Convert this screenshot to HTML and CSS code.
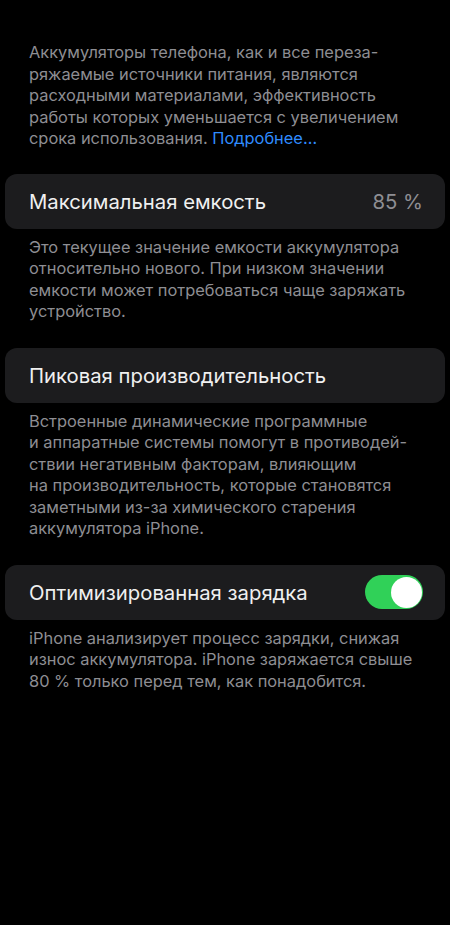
FILE: index.html
```html
<!DOCTYPE html>
<html lang="ru">
<head>
<meta charset="utf-8">
<link rel="stylesheet" href="styles.css">
</head>
<body>
<div class="page">
  <p class="note first">Аккумуляторы телефона, как и все переза-<br>ряжаемые источники питания, являются<br>расходными материалами, эффективность<br>работы которых уменьшается с увеличением<br>срока использования. <span class="link">Подробнее…</span></p>

  <div class="card"><span class="title">Максимальная емкость</span><span class="value">85 %</span></div>
  <p class="note">Это текущее значение емкости аккумулятора<br>относительно нового. При низком значении<br>емкости может потребоваться чаще заряжать<br>устройство.</p>

  <div class="card"><span class="title">Пиковая производительность</span></div>
  <p class="note">Встроенные динамические программные<br>и аппаратные системы помогут в противодей-<br>ствии негативным факторам, влияющим<br>на производительность, которые становятся<br>заметными из-за химического старения<br>аккумулятора iPhone.</p>

  <div class="card"><span class="title">Оптимизированная зарядка</span><span class="toggle"><span class="knob"></span></span></div>
  <p class="note">iPhone анализирует процесс зарядки, снижая<br>износ аккумулятора. iPhone заряжается свыше<br>80 % только перед тем, как понадобится.</p>
</div>
</body>
</html>
```

FILE: styles.css
```css
html, body {
  margin: 0;
  padding: 0;
  background: #000;
}
body {
  width: 450px;
  height: 925px;
  overflow: hidden;
  font-family: Inter, Roboto, "Noto Sans", sans-serif;
}
.page {
  padding: 42px 5px 0 5px;
}
.note {
  margin: 0 0 25px 0;
  padding: 8px 0 0 24px;
  color: #8e8e93;
  font-size: 16.4px;
  line-height: 21.5px;
  white-space: nowrap;
}
.note.first {
  padding-top: 0;
  margin-bottom: 24px;
}
.link {
  color: #2f8cff;
}
.card {
  display: flex;
  align-items: center;
  justify-content: space-between;
  height: 55px;
  background: #1c1c1e;
  border-radius: 12px;
  padding: 0 22px 0 24px;
}
.title {
  color: #f0f0f0;
  font-size: 20.3px;
}
.value {
  color: #8e8e93;
  font-size: 20.3px;
}
.toggle {
  display: flex;
  align-items: center;
  justify-content: flex-end;
  width: 58px;
  height: 34px;
  border-radius: 17px;
  background: #30d158;
  padding: 2px 1px;
  box-sizing: border-box;
}
.knob {
  width: 31px;
  height: 31px;
  border-radius: 50%;
  background: #fff;
}
```
